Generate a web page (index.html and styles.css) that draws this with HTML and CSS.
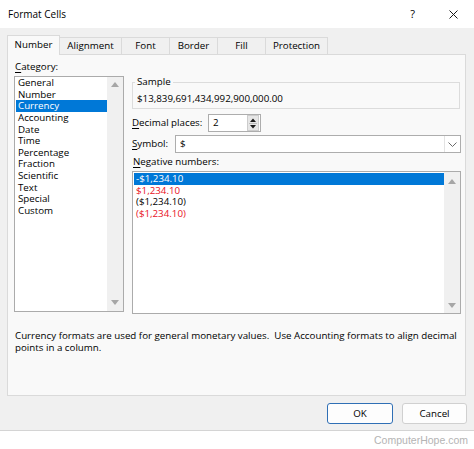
FILE: index.html
```html
<!DOCTYPE html>
<html lang="en">
<head>
<meta charset="utf-8">
<title>Format Cells</title>
<link rel="stylesheet" href="styles.css">
</head>
<body>
<div class="titlebar">
  <span class="title">Format Cells</span>
  <div class="title-controls">
    <span class="help">?</span>
    <svg class="close" width="9" height="9" viewBox="0 0 9 9"><path d="M0.5 0.5L8.5 8.5M8.5 0.5L0.5 8.5" stroke="#1a1a1a" stroke-width="1" fill="none"/></svg>
  </div>
</div>
<div class="dialog">
  <div class="tabs">
    <div class="tab active w53">Number</div>
    <div class="tab w62">Alignment</div>
    <div class="tab w48">Font</div>
    <div class="tab w48">Border</div>
    <div class="tab w48">Fill</div>
    <div class="tab w62">Protection</div>
  </div>
  <div class="panel">
    <div class="columns">
      <div class="col-left">
        <div class="label"><u>C</u>ategory:</div>
        <div class="listbox cat">
          <ul class="items">
            <li>General</li>
            <li>Number</li>
            <li class="sel">Currency</li>
            <li>Accounting</li>
            <li>Date</li>
            <li>Time</li>
            <li>Percentage</li>
            <li>Fraction</li>
            <li>Scientific</li>
            <li>Text</li>
            <li>Special</li>
            <li>Custom</li>
          </ul>
          <div class="scrollbar sb-cat">
            <svg width="8" height="5" viewBox="0 0 8 5"><path d="M4 0L8 5H0Z" fill="#a6a6a6"/></svg>
            <svg width="8" height="5" viewBox="0 0 8 5"><path d="M0 0H8L4 5Z" fill="#a6a6a6"/></svg>
          </div>
        </div>
      </div>
      <div class="col-right">
        <fieldset class="sample">
          <legend>Sample</legend>
          <div class="sample-value">$13,839,691,434,992,900,000.00</div>
        </fieldset>
        <div class="row row-decimal">
          <span class="row-label lbl-decimal"><u>D</u>ecimal places:</span>
          <div class="spin">
            <span class="spin-val">2</span>
            <div class="spin-btns">
              <svg width="10" height="15" viewBox="0 0 10 15"><path d="M5 2.5L8 6H2Z" fill="#1a1a1a"/><path d="M1 7.5H9" stroke="#bdbdbd" stroke-width="1"/><path d="M2 9H8L5 12.5Z" fill="#1a1a1a"/></svg>
            </div>
          </div>
        </div>
        <div class="row row-symbol">
          <span class="row-label lbl-symbol"><u>S</u>ymbol:</span>
          <div class="combo">
            <span class="combo-val">$</span>
            <div class="combo-btn">
              <svg width="9" height="5" viewBox="0 0 9 5"><path d="M0.5 0.5L4.5 4.5L8.5 0.5" stroke="#6b6b6b" stroke-width="1" fill="none"/></svg>
            </div>
          </div>
        </div>
        <div class="label neg-label"><u>N</u>egative numbers:</div>
        <div class="listbox neg">
          <ul class="items">
            <li class="sel">-$1,234.10</li>
            <li class="red">$1,234.10</li>
            <li>($1,234.10)</li>
            <li class="red">($1,234.10)</li>
          </ul>
          <div class="scrollbar sb-neg">
            <svg width="8" height="5" viewBox="0 0 8 5"><path d="M4 0L8 5H0Z" fill="#a6a6a6"/></svg>
            <svg width="8" height="5" viewBox="0 0 8 5"><path d="M0 0H8L4 5Z" fill="#a6a6a6"/></svg>
          </div>
        </div>
      </div>
    </div>
    <p class="desc">Currency formats are used for general monetary values.&nbsp; Use Accounting formats to align decimal points in a column.</p>
  </div>
  <div class="buttons">
    <button class="btn btn-default">OK</button>
    <button class="btn btn-cancel">Cancel</button>
  </div>
</div>
<div class="footer">ComputerHope.com</div>
</body>
</html>
```

FILE: styles.css
```css
* { box-sizing: border-box; }
html, body { margin: 0; padding: 0; }
body {
  width: 474px;
  height: 449px;
  overflow: hidden;
  background: #ffffff;
  font-family: "Open Sans", "Noto Sans", sans-serif;
  font-size: 9.75px;
  color: #000000;
}
u { text-decoration-thickness: 1px; text-underline-offset: 1.5px; }

.titlebar {
  height: 28px;
  display: flex;
  align-items: center;
  justify-content: space-between;
  padding-left: 8px;
  background: #ffffff;
}
.title { font-size: 10px; line-height: 14px; }
.title-controls { display: flex; align-items: center; }
.help { width: 11px; text-align: center; font-size: 11px; line-height: 14px; margin-right: 31px; }
.close { display: block; margin-right: 16px; }

.dialog {
  height: 403px;
  background: #f0f0f0;
  border-bottom: 1px solid #d4d4d4;
  padding: 7px 7px 0 7px;
}

.tabs {
  display: flex;
  align-items: flex-end;
  height: 20px;
  margin-bottom: -1px;
  position: relative;
  z-index: 1;
}
.tab {
  flex: none;
  height: 17px;
  margin-bottom: 1px;
  padding-top: 1px;
  line-height: 14px;
  text-align: center;
  background: #f0f0f0;
  border-top: 1px solid #dadada;
  border-right: 1px solid #dadada;
  white-space: nowrap;
}
.tab.active {
  height: 20px;
  margin-bottom: 0;
  padding-top: 2px;
  background: #f9f9f9;
  border-left: 1px solid #dadada;
}
.w53 { width: 53px; }
.w62 { width: 62px; }
.w48 { width: 48px; }

.panel {
  width: 459px;
  height: 342px;
  background: #f9f9f9;
  border: 1px solid #dadada;
  padding: 5px 3px 0 6px;
}
.columns { display: flex; gap: 8px; }
.col-left { width: 110px; flex: none; }
.col-right { width: 329px; flex: none; padding-top: 15px; }

.label { height: 14px; line-height: 14px; padding-left: 1px; }

.listbox {
  margin-top: 2px;
  border: 1px solid #ababab;
  background: #ffffff;
  display: flex;
}
.listbox.cat { height: 236px; }
.listbox.neg { height: 143px; }
.items {
  flex: 1;
  list-style: none;
  margin: 0;
  padding: 0 0 0 1px;
}
.neg .items { padding-top: 1px; }
.items li {
  line-height: 11.64px;
  height: 11.64px;
  padding-left: 2px;
  white-space: nowrap;
}
.items li.sel { background: #0078d7; color: #ffffff; }
.items li.red { color: #e81123; }

.scrollbar {
  width: 16px;
  flex: none;
  background: #f0f0f0;
  display: flex;
  flex-direction: column;
  justify-content: space-between;
  align-items: center;
}
.scrollbar svg { display: block; }
.sb-cat { padding: 5px 0 6px; }
.sb-neg { padding: 7px 0 5px; }

.sample {
  margin: 0 1px 0 0;
  padding: 3px 4px 2px 2px;
  border: 1px solid #dcdcdc;
  min-width: 0;
}
.sample legend { padding: 0 2px; line-height: 14px; }
.sample-value { line-height: 14px; padding-left: 2px; }

.row { display: flex; align-items: center; height: 18px; }
.row-decimal { margin-top: 5px; }
.row-symbol { margin-top: 3px; }
.row-label { flex: none; line-height: 14px; }
.lbl-decimal { width: 76px; }
.lbl-symbol { width: 43px; }

.spin {
  width: 53px;
  height: 18px;
  border: 1px solid #adadad;
  background: #ffffff;
  display: flex;
}
.spin-val { flex: 1; line-height: 16px; padding-left: 4px; }
.spin-btns {
  width: 12px;
  margin: 0 1px 0 0;
  background: #e6e6e6;
  border: 1px solid #cccccc;
  display: flex;
  align-items: center;
  justify-content: center;
}
.spin-btns svg { display: block; }

.combo {
  flex: 1;
  height: 18px;
  border: 1px solid #adadad;
  background: #ffffff;
  display: flex;
}
.combo-val { flex: 1; line-height: 16px; padding-left: 4px; }
.combo-btn {
  width: 16px;
  border-left: 1px solid #e3e3e3;
  display: flex;
  align-items: center;
  justify-content: center;
}
.combo-btn svg { display: block; }

.neg-label { margin-top: 2px; }

.desc {
  margin: 16px 0 0 0;
  padding-left: 1px;
  line-height: 12px;
}

.buttons {
  display: flex;
  justify-content: flex-end;
  gap: 9px;
  margin-top: 7px;
}
.btn {
  height: 21px;
  border: 1px solid #d0d0d0;
  border-radius: 3px;
  background: #fdfdfd;
  font-family: "Open Sans", "Noto Sans", sans-serif;
  font-size: 9.75px;
  color: #000000;
  padding: 0;
}
.btn-default { width: 66px; border-color: #2f6fb5; }
.btn-cancel { width: 65px; }

.footer {
  height: 18px;
  line-height: 18px;
  text-align: right;
  padding-right: 6px;
  font-family: "Liberation Sans", Arial, sans-serif;
  font-size: 10.5px;
  color: #b4b4b4;
}
```
